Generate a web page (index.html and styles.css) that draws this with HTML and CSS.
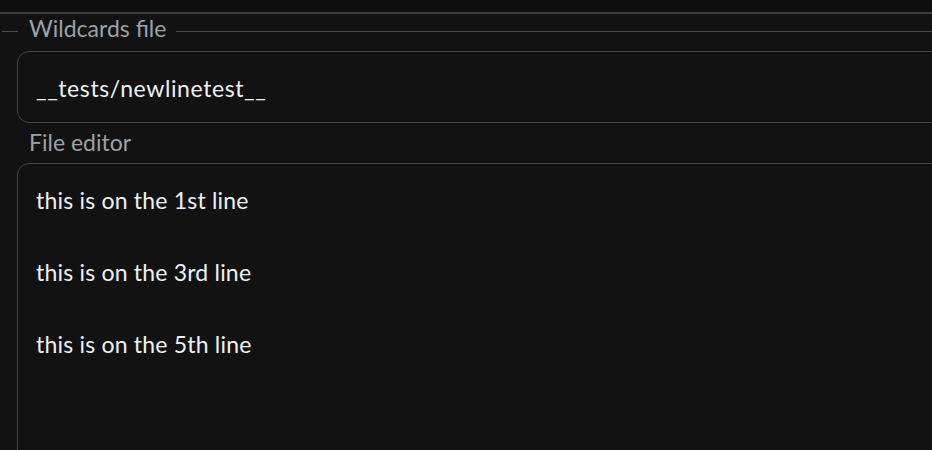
FILE: index.html
```html
<!DOCTYPE html>
<html>
<head>
<meta charset="utf-8">
<link rel="stylesheet" href="styles.css">
</head>
<body>
<div class="topbar"></div>
<div class="group">
  <div class="legend-row">
    <span class="rule rule-short"></span>
    <span class="legend">Wildcards file</span>
    <span class="rule rule-long"></span>
  </div>
  <div class="input-box">__tests/newlinetest__</div>
  <div class="label">File editor</div>
  <div class="editor">
    <div class="line">this is on the 1st line</div>
    <div class="line"></div>
    <div class="line">this is on the 3rd line</div>
    <div class="line"></div>
    <div class="line">this is on the 5th line</div>
  </div>
</div>
</body>
</html>
```

FILE: styles.css
```css
html, body {
  margin: 0;
  padding: 0;
  background: #121212;
  overflow: hidden;
  width: 932px;
  height: 450px;
}
body {
  font-family: "Lato", "Liberation Sans", sans-serif;
}
.topbar {
  height: 12px;
  background: #0e0e0e;
  border-bottom: 2px solid #3a3a3a;
}
.group {
  display: flex;
  flex-direction: column;
}
.legend-row {
  display: flex;
  align-items: center;
  height: 30px;
}
.rule {
  height: 1px;
  margin-top: 4px;
  background: #4a4a4a;
}
.rule-short {
  width: 16px;
  margin-left: 2px;
}
.rule-long {
  flex: 1;
}
.legend {
  padding: 0 10px 3px 11px;
  font-size: 23px;
  color: #9ca1aa;
}
.input-box {
  margin-top: 7px;
  margin-left: 17px;
  margin-right: -30px;
  height: 72px;
  box-sizing: border-box;
  border: 1px solid #444;
  border-radius: 12px;
  padding: 2px 18px 0;
  display: flex;
  align-items: center;
  font-size: 23px;
  letter-spacing: 0.6px;
  color: #eef0f3;
}
.label {
  margin-left: 29px;
  height: 40px;
  line-height: 39px;
  font-size: 23px;
  color: #9ca1aa;
}
.editor {
  margin-left: 17px;
  margin-right: -30px;
  height: 320px;
  box-sizing: border-box;
  border: 1px solid #444;
  border-radius: 12px;
  padding: 18px 18px;
  font-size: 23px;
  letter-spacing: 0.2px;
  color: #eef0f3;
}
.line {
  height: 36px;
  line-height: 36px;
}
```
